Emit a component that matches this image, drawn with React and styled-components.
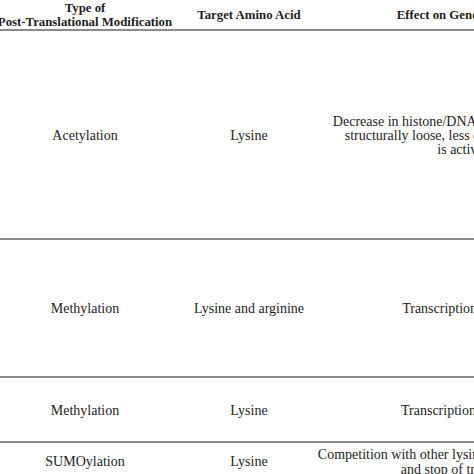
import React from "react";
import styled, { createGlobalStyle } from "styled-components";

const GlobalStyle = createGlobalStyle`
  html, body {
    margin: 0;
    padding: 0;
    background: #ffffff;
    overflow: hidden;
  }
  body {
    font-family: "Liberation Serif", "DejaVu Serif", serif;
    color: #1e1e1e;
  }
`;

const rows = [
  {
    type: "Acetylation",
    target: "Lysine",
    effect: [
      "Decrease in histone/DNA affinity; the chromatin",
      "structurally loose, less condensed, and DNA",
      "is activated",
    ],
    height: 209,
  },
  {
    type: "Methylation",
    target: "Lysine and arginine",
    effect: ["Transcription activation"],
    height: 138,
  },
  {
    type: "Methylation",
    target: "Lysine",
    effect: ["Transcription repression"],
    height: 65,
  },
  {
    type: "SUMOylation",
    target: "Lysine",
    effect: [
      "Competition with other lysine-targeting modifications",
      "and stop of transcription",
    ],
    height: 36,
  },
];

const Table = styled.div`
  width: 650px;
  margin-left: -20px;
  display: flex;
  flex-direction: column;
`;

const Row = styled.div`
  display: grid;
  grid-template-columns: 210px 118px 322px;
  align-items: center;
  height: ${(p) => p.$h}px;
  box-sizing: border-box;
  border-bottom: ${(p) => (p.$last ? "none" : "2px solid #8c8c8c")};
`;

const Cell = styled.div`
  text-align: center;
  white-space: nowrap;
  font-size: 14px;
  line-height: 14.2px;
  padding-top: 3px;
`;

const HeadCell = styled(Cell)`
  font-weight: bold;
  font-size: 12.8px;
  line-height: 13.5px;
  padding-top: 2px;
`;

export default function App() {
  return (
    <>
      <GlobalStyle />
      <Table>
        <Row $h={31}>
          <HeadCell>
            Type of
            <br />
            Post-Translational Modification
          </HeadCell>
          <HeadCell>Target Amino Acid</HeadCell>
          <HeadCell>Effect on Gene Expression</HeadCell>
        </Row>
        {rows.map((r, i) => (
          <Row key={i} $h={r.height} $last={i === rows.length - 1}>
            <Cell>{r.type}</Cell>
            <Cell>{r.target}</Cell>
            <Cell>
              {r.effect.map((line, j) => (
                <React.Fragment key={j}>
                  {j > 0 && <br />}
                  {line}
                </React.Fragment>
              ))}
            </Cell>
          </Row>
        ))}
      </Table>
    </>
  );
}
